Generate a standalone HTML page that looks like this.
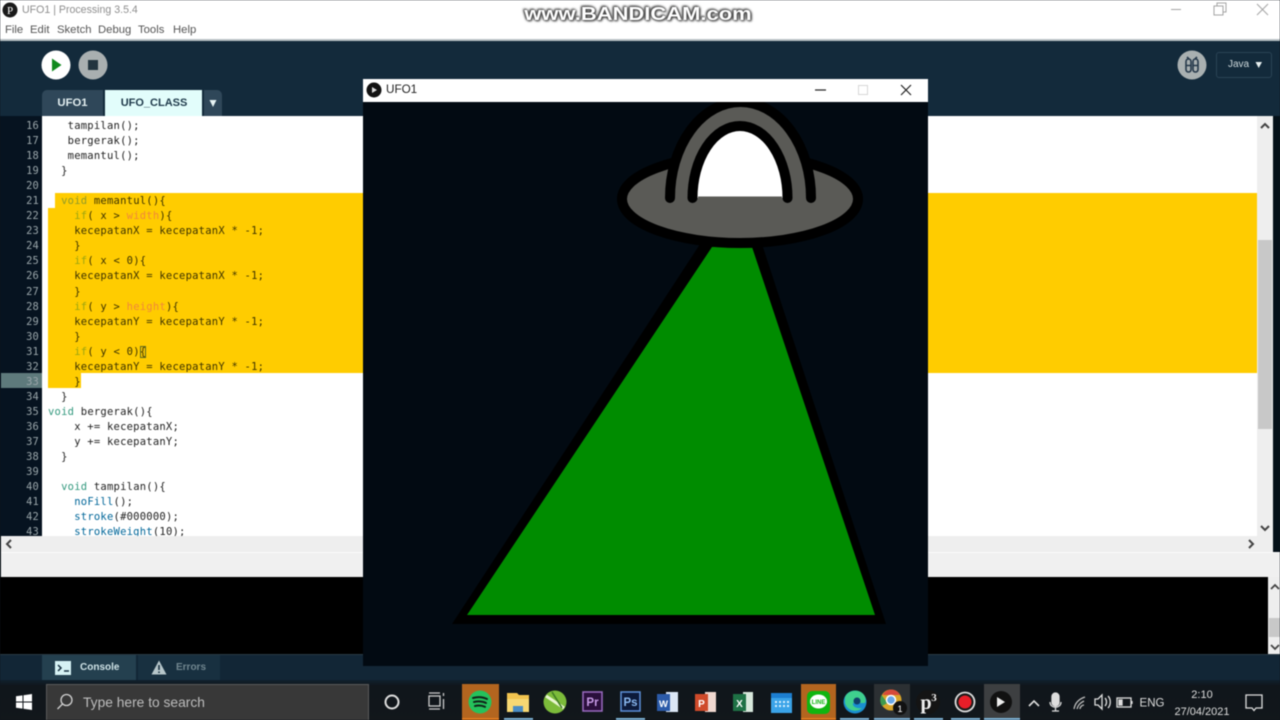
<!DOCTYPE html>
<html><head><meta charset="utf-8">
<style>
html,body{margin:0;padding:0;width:1280px;height:720px;overflow:hidden;background:#10171c}
body{position:relative;font-family:"Liberation Sans",sans-serif}
.a{position:absolute}
#blur{position:absolute;left:0;top:0;width:1280px;height:720px;filter:blur(.4px)}
.ln{position:absolute;left:0;width:39px;text-align:right;font:10.4px/15.04px "DejaVu Sans Mono",monospace;color:#9aa6aa;letter-spacing:.2px}
.c{position:absolute;left:48px;white-space:pre;font:10.5px/15.04px "DejaVu Sans Mono",monospace;letter-spacing:.23px;color:#222}
.y{color:#3d3300}
.v{color:#33997e}.i{color:#669900}.p{color:#006699}
.y .v{color:#8f9a28}.y .i{color:#9aa510}.w{color:#f0883a}
</style></head><body><div id="blur">

<!-- title bar -->
<div class="a" style="left:0;top:0;width:1280px;height:39px;background:#fff"></div>
<div class="a" style="left:0;top:39px;width:1280px;height:2px;background:#b9c1c5"></div>
<svg class="a" style="left:2px;top:2px" width="16" height="16"><circle cx="8" cy="8" r="7.5" fill="#1a1a1a"/><text x="8" y="12" text-anchor="middle" font-family="Liberation Serif" font-size="11" fill="#fff">P</text></svg>
<div class="a" style="left:22px;top:3px;font-size:10.6px;line-height:14px;color:#8e8e8e;white-space:pre">UFO1 | Processing 3.5.4</div>
<div class="a" style="left:5px;top:24px;font-size:11.3px;color:#555;white-space:pre">File</div>
<div class="a" style="left:30px;top:24px;font-size:11.3px;color:#555">Edit</div>
<div class="a" style="left:57px;top:24px;font-size:11.3px;color:#555">Sketch</div>
<div class="a" style="left:98px;top:24px;font-size:11.3px;color:#555">Debug</div>
<div class="a" style="left:138px;top:24px;font-size:11.3px;color:#555">Tools</div>
<div class="a" style="left:173px;top:24px;font-size:11.3px;color:#555">Help</div>
<svg class="a" style="left:1165px;top:0" width="115" height="20" fill="none" stroke="#a5a5a5" stroke-width="1"><path d="M6 9.5h10"/><path d="M49 6h9v9h-9zM52 6V3h9v9h-3"/><path d="M92 4l11 11M103 4l-11 11"/></svg>

<div class="a" style="left:515px;top:3px;width:246px;text-align:center;font:bold 18px/22px 'Liberation Sans',sans-serif;color:#fff;white-space:pre;transform:scaleX(1.22);text-shadow:0 0 2px #444,0 0 3px #444,1px 1px 2px #444,-1px -1px 2px #444">www.BANDICAM.com</div>

<!-- main dark -->
<div class="a" style="left:0;top:41px;width:1280px;height:75px;background:#132a3b"></div>
<div class="a" style="left:0;top:116px;width:42px;height:420px;background:#061320"></div>
<div class="a" style="left:1273px;top:116px;width:7px;height:436px;background:#041018"></div>

<svg class="a" style="left:40px;top:49px" width="70" height="32"><circle cx="16" cy="16" r="14.5" fill="#fff"/><path d="M12 9.5L21.5 16L12 22.5Z" fill="#118a1d"/><circle cx="53" cy="16" r="14.5" fill="#a9afb0"/><rect x="48" y="11" width="10" height="10" fill="#22343f"/></svg>

<div class="a" style="left:42px;top:90px;width:61px;height:26px;background:#2f4759;border-radius:5px 0 0 0;color:#e2eef0;font:bold 11.3px/26px 'Liberation Sans',sans-serif;text-align:center">UFO1</div>
<div class="a" style="left:105px;top:90px;width:97px;height:26px;background:#e2fdfb;color:#1f3a4b;font:bold 11px/26px 'Liberation Sans',sans-serif;text-align:center;text-indent:1px">UFO_CLASS</div>
<div class="a" style="left:204px;top:90px;width:18px;height:26px;background:#2f4759;border-radius:0 5px 0 0"></div>
<svg class="a" style="left:209px;top:99px" width="9" height="9"><path d="M0.5 1h7L4 8z" fill="#e8f4f4"/></svg>

<svg class="a" style="left:1177px;top:50px" width="30" height="30" fill="none" stroke="#25384a" stroke-width="1.6"><circle cx="15" cy="15" r="14.500" fill="#a9b0b1" stroke="none"/><rect x="9" y="9" width="5" height="13" rx="2.500"/><rect x="16" y="9" width="5" height="13" rx="2.500"/><path d="M9 15.500h5M16 15.500h5M10 7l2 2M20 7l-2 2"/></svg>
<div class="a" style="left:1216px;top:52px;width:56px;height:26px;border:1px solid #2a4355;border-radius:3px;box-sizing:border-box;color:#cfdadd;font-size:10px;line-height:24px;padding-left:11px">Java</div>
<svg class="a" style="left:1255px;top:61px" width="8" height="8"><path d="M.5 1h6.500L3.700 7z" fill="#e8f0f0"/></svg>

<!-- editor -->
<div class="a" style="left:42px;top:116px;width:1215px;height:420px;background:#fff"></div>
<div class="a" style="left:1257px;top:116px;width:16px;height:420px;background:#eeeeee"></div>
<div class="a" style="left:1258px;top:240px;width:14px;height:189px;background:#c8c8c8"></div>
<svg class="a" style="left:1258px;top:120px" width="14" height="420" fill="none" stroke="#444" stroke-width="2"><path d="M3 8l4-4 4 4M3 406l4 4 4-4"/></svg>
<div class="a" style="left:55px;top:193px;width:1202px;height:15px;background:#ffcc00"></div>
<div class="a" style="left:48px;top:208px;width:1209px;height:165px;background:#ffcc00"></div>
<div class="a" style="left:48px;top:373px;width:33px;height:15px;background:#ffcc00"></div>
<div class="a" style="left:1px;top:373px;width:41px;height:15px;background:#5e7a7c"></div>

<div class="ln" style="top:119px">16<br>17<br>18<br>19<br>20<br>21<br>22<br>23<br>24<br>25<br>26<br>27<br>28<br>29<br>30<br>31<br>32<br>33<br>34<br>35<br>36<br>37<br>38<br>39<br>40<br>41<br>42<br>43</div>

<div class="a" style="left:42px;top:116px;width:322px;height:420px;overflow:hidden">
<div class="c" style="left:6px;top:3px">   tampilan();
   bergerak();
   memantul();
  }

<span class="y">  <span class="v">void</span> memantul(){
    <span class="i">if</span>( x &gt; <span class="w">width</span>){
    kecepatanX = kecepatanX * -1;
    }
    <span class="i">if</span>( x &lt; 0){
    kecepatanX = kecepatanX * -1;
    }
    <span class="i">if</span>( y &gt; <span class="w">height</span>){
    kecepatanY = kecepatanY * -1;
    }
    <span class="i">if</span>( y &lt; 0)<span style="outline:1px solid #5d6a20;outline-offset:-1px">{</span>
    kecepatanY = kecepatanY * -1;
    }</span>
  }
<span class="v">void</span> bergerak(){
    x += kecepatanX;
    y += kecepatanY;
  }

  <span class="v">void</span> tampilan(){
    <span class="p">noFill</span>();
    <span class="p">stroke</span>(#000000);
    <span class="p">strokeWeight</span>(10);</div>
</div>

<!-- horizontal scroll + status -->
<div class="a" style="left:1px;top:536px;width:1272px;height:16px;background:#eeeeee"></div>
<div class="a" style="left:1px;top:552px;width:1279px;height:25px;background:#f0f0f0;border-top:1px solid #fafafa;box-sizing:border-box"></div>
<svg class="a" style="left:4px;top:538px" width="10" height="12" fill="none" stroke="#444" stroke-width="2"><path d="M7 2L3 6l4 4"/></svg>
<svg class="a" style="left:1246px;top:538px" width="10" height="12" fill="none" stroke="#444" stroke-width="2"><path d="M3 2l4 4-4 4"/></svg>

<!-- console -->
<div class="a" style="left:0;top:577px;width:1280px;height:77px;background:#000"></div>
<div class="a" style="left:1268px;top:577px;width:12px;height:77px;background:#eeeeee"></div>
<div class="a" style="left:1269px;top:618px;width:11px;height:19px;background:#c8c8c8"></div>
<svg class="a" style="left:1270px;top:582px" width="10" height="70" fill="none" stroke="#444" stroke-width="1.800"><path d="M1 7l4-4 4 4M1 63l4 4 4-4"/></svg>

<div class="a" style="left:0;top:654px;width:1280px;height:30px;background:#122636;border-top:1px solid #2a3a44;box-sizing:border-box"></div>
<div class="a" style="left:42px;top:655px;width:94px;height:25px;background:#24404f"></div>
<div class="a" style="left:138px;top:655px;width:82px;height:25px;background:#183040"></div>
<svg class="a" style="left:55px;top:661px" width="16" height="14"><rect width="16" height="14" fill="#d6f2f4"/><path d="M3 4l3 3-3 3" fill="none" stroke="#173040" stroke-width="1.500"/><path d="M9 10h5" stroke="#173040" stroke-width="1.500"/></svg>
<div class="a" style="left:80px;top:655px;font:bold 10px/25px 'Liberation Sans',sans-serif;color:#cfe2e6">Console</div>
<svg class="a" style="left:151px;top:660px" width="16" height="15"><path d="M8 0.500L15.500 14.500H.5Z" fill="#b6c6ca"/><path d="M8 5v5M8 11.500v1.500" stroke="#183040" stroke-width="1.600"/></svg>
<div class="a" style="left:176px;top:655px;font:bold 10px/25px 'Liberation Sans',sans-serif;color:#71868f">Errors</div>

<!-- sketch window -->
<div class="a" style="left:363px;top:79px;width:565px;height:24px;background:#fff"></div>
<div class="a" style="left:363px;top:102px;width:565px;height:564px;background:#020a12"></div>
<svg class="a" style="left:366px;top:82px" width="16" height="16"><circle cx="8" cy="8" r="7.500" fill="#111"/><path d="M6 5l5 3-5 3z" fill="#ddd"/></svg>
<div class="a" style="left:386px;top:83px;font-size:11.700px;color:#222">UFO1</div>
<svg class="a" style="left:810px;top:82px" width="110" height="16" fill="none"><path d="M5 8h11" stroke="#222" stroke-width="1.200"/><rect x="48.500" y="3.500" width="9" height="9" stroke="#d8d8d8"/><path d="M91 3l10 10M101 3L91 13" stroke="#222" stroke-width="1.200"/></svg>

<svg class="a" style="left:363px;top:102px" width="565" height="564">
<g transform="translate(-363,-102)">
<polygon points="452,624 886,624 760,238 704,238" fill="#000"/>
<polygon points="467,615 875,615 752,247 712,247" fill="#008c00"/>
<ellipse cx="740" cy="199" rx="118" ry="44" fill="#5a5a56" stroke="#000" stroke-width="10"/>
<path d="M670 198A70.500 96 0 0 1 811 198" fill="#5a5a56" stroke="#000" stroke-width="10" stroke-linecap="round"/>
<path d="M692.500 198A47.500 72 0 0 1 787.500 198Z" fill="#fff"/>
<path d="M692.500 198A47.500 72 0 0 1 787.500 198" fill="none" stroke="#000" stroke-width="10" stroke-linecap="round"/>
<rect x="698" y="196.500" width="84" height="1.500" fill="#5a5a56"/>
</g>
</svg>

<!-- taskbar -->
<div class="a" style="left:0;top:680px;width:1280px;height:40px;background:linear-gradient(#10202d,#10161b 6px,#12171b)"></div>
<svg class="a" style="left:16px;top:694px" width="16" height="16" fill="#fff"><path d="M0 2.300L6.500 1.400V7.500H0ZM7.500 1.200L16 0V7.500H7.500ZM0 8.500H6.500V14.600L0 13.700ZM7.500 8.500H16V16L7.500 14.800Z"/></svg>
<div class="a" style="left:46px;top:684px;width:323px;height:36px;background:#383838;border:1px solid #5a5a5a;border-bottom:0;box-sizing:border-box"></div>
<svg class="a" style="left:56px;top:693px" width="18" height="18" fill="none" stroke="#d0d0d0" stroke-width="1.300"><circle cx="10.500" cy="7" r="5.500"/><path d="M6.500 11L1.500 16"/></svg>
<div class="a" style="left:83px;top:695px;font-size:13.800px;color:#bdbdbd">Type here to search</div>

<svg class="a" style="left:370px;top:684px" width="910" height="36">
<circle cx="22" cy="18" r="6.500" fill="none" stroke="#ddd" stroke-width="2"/>
<g fill="none" stroke="#ccc" stroke-width="1.300"><rect x="59" y="12" width="11" height="10"/><path d="M59 9h11M59 25h11M73.500 9v3M73.500 15v10"/></g>
<rect x="92" y="0" width="37" height="36" fill="#b3651f"/><rect x="92" y="34" width="37" height="2" fill="#e07a20"/>
<circle cx="110" cy="18" r="11.500" fill="#25c25c"/><g fill="none" stroke="#10241a" stroke-width="2" stroke-linecap="round"><path d="M103 14c5-1.500 10-1 14 1"/><path d="M104 18c4-1 9-.8 12 1"/><path d="M105 22c3.500-.8 7-.5 10 .8"/></g>
<path d="M137 9h10l2 2h10v17h-22Z" fill="#f2c44f"/><rect x="137" y="15" width="22" height="13" fill="#f7d873"/><rect x="143" y="22" width="10" height="6" fill="#4a8cc4"/>
<rect x="134" y="34" width="29" height="2" fill="#7fb4d8"/>
<circle cx="185" cy="18" r="11.500" fill="#7cbb3a"/><path d="M176 12L194 24" stroke="#e8f5d0" stroke-width="3"/><path d="M182 8l10 16" stroke="#3d7a22" stroke-width="1.500"/>
<rect x="213" y="8" width="19" height="19" fill="#2a0f3c" stroke="#9a6bc0" stroke-width="1.500"/><text x="222.500" y="22" text-anchor="middle" font-size="11.500" font-weight="bold" fill="#c79be6" font-family="Liberation Sans">Pr</text>
<rect x="251" y="8" width="19" height="19" fill="#0c1a3a" stroke="#5d8fd8" stroke-width="1.500"/><text x="260.500" y="22" text-anchor="middle" font-size="11.500" font-weight="bold" fill="#8ab8f0" font-family="Liberation Sans">Ps</text>
<rect x="246" y="34" width="29" height="2" fill="#7fb4d8"/>
<rect x="296" y="8" width="12" height="20" fill="#dbe6f5"/><rect x="287" y="10" width="13" height="17" fill="#2b5aa8"/><text x="293.500" y="23" text-anchor="middle" font-size="9.500" font-weight="bold" fill="#fff" font-family="Liberation Sans">W</text>
<rect x="335" y="8" width="11" height="20" fill="#f0d8d0"/><rect x="325" y="10" width="13" height="17" fill="#cf4a2a"/><text x="331.500" y="23" text-anchor="middle" font-size="10" font-weight="bold" fill="#fff" font-family="Liberation Sans">P</text>
<rect x="373" y="8" width="10" height="20" fill="#d8e8dc"/><rect x="363" y="10" width="13" height="17" fill="#1e7145"/><text x="369.500" y="23" text-anchor="middle" font-size="10" font-weight="bold" fill="#fff" font-family="Liberation Sans">X</text>
<rect x="401" y="9" width="21" height="20" fill="#3aa3e8"/><rect x="401" y="9" width="21" height="5" fill="#1c7ed0"/><g fill="#d8f0ff"><rect x="405" y="17" width="2" height="2"/><rect x="409" y="17" width="2" height="2"/><rect x="413" y="17" width="2" height="2"/><rect x="417" y="17" width="2" height="2"/><rect x="405" y="21" width="2" height="2"/><rect x="409" y="21" width="2" height="2"/><rect x="413" y="21" width="2" height="2"/><rect x="417" y="21" width="2" height="2"/></g>
<rect x="431" y="0" width="35" height="36" fill="#b3651f"/><rect x="431" y="34" width="35" height="2" fill="#e07a20"/>
<rect x="437" y="7" width="23" height="23" rx="5" fill="#10b510"/><ellipse cx="448.500" cy="17.500" rx="8.500" ry="7" fill="#fff"/><text x="448.500" y="20" text-anchor="middle" font-size="6" font-weight="bold" fill="#10b510" font-family="Liberation Sans">LINE</text>
<circle cx="485" cy="18" r="11.500" fill="#1a8fd0"/><path d="M475 13c3-7 14-9 19-2 2 3 2 6 1 8h-12c-1 3 3 6 9 5-5 5-15 3-17-5z" fill="#3fcf8e"/><circle cx="487" cy="17" r="3.500" fill="#0f3f6a"/>
<rect x="470" y="34" width="29" height="2" fill="#7fb4d8"/>
<rect x="504" y="0" width="36" height="36" fill="#2c3033"/>
<circle cx="521" cy="16" r="10.500" fill="#d9a52a"/><path d="M521 5.500a10.500 10.500 0 0 1 9 5.500h-15l-2.500 0A10.500 10.500 0 0 1 521 5.500Z" fill="#d64a3a"/><path d="M512 22a10.500 10.500 0 0 1-.5-11l6 8z" fill="#3e9a4f"/><circle cx="521" cy="16" r="4.500" fill="#6aa8e8" stroke="#fff" stroke-width="1.500"/><circle cx="530" cy="24" r="7" fill="#111"/><text x="530" y="28" text-anchor="middle" font-size="9" fill="#fff" font-family="Liberation Sans">1</text>
<rect x="504" y="34" width="36" height="2" fill="#7fb4d8"/>
<circle cx="558" cy="18" r="12" fill="#141414"/><text x="556" y="25" text-anchor="middle" font-size="20" font-weight="bold" font-family="Liberation Serif" fill="#eee">p</text><text x="564" y="17" text-anchor="middle" font-size="11" font-weight="bold" font-family="Liberation Serif" fill="#eee">3</text>
<rect x="544" y="34" width="29" height="2" fill="#7fb4d8"/>
<circle cx="595" cy="18" r="9.500" fill="#1a1a1a" stroke="#ddd" stroke-width="1.800"/><circle cx="595" cy="18" r="6.500" fill="#e81e28"/>
<rect x="581" y="34" width="29" height="2" fill="#7fb4d8"/>
<rect x="614" y="0" width="36" height="36" fill="#3d3f41"/><rect x="614" y="34" width="36" height="2" fill="#7fb4d8"/>
<circle cx="631" cy="18" r="11" fill="#111"/><path d="M627 13l8 5-8 5z" fill="#eee"/>
<g fill="none" stroke="#ddd" stroke-width="1.300">
<path d="M659 22l5-5 5 5" stroke-width="1.600"/>
<rect x="682" y="9" width="7" height="13" rx="3.500" fill="#ddd"/><path d="M680 18c0 7 11 7 11 0M685.500 23v4M682 27h7"/>
<path d="M704 25c1-6 5-10 11-12M707 25c1-4 3-6 7-8M710 25c0-2 2-4 4-4" stroke="#bbb"/>
<path d="M725 15h3l4-4v14l-4-4h-3zM735 14c2 2 2 6 0 8M738 12c3 3 3 9 0 12"/>
<rect x="747" y="14" width="14" height="9"/><rect x="749" y="16" width="3" height="5" fill="#ddd"/><path d="M762 17v3"/>
<path d="M876 11h16v13h-6l-2 2.500-2-2.500h-6z"/>
</g>
<text x="782" y="22.500" text-anchor="middle" font-size="11.500" fill="#ddd" font-family="Liberation Sans">ENG</text>
<text x="832" y="14" text-anchor="middle" font-size="11" fill="#ddd" font-family="Liberation Sans">2:10</text>
<text x="832" y="31" text-anchor="middle" font-size="11" fill="#ddd" font-family="Liberation Sans">27/04/2021</text>
</svg>

</div></body></html>
